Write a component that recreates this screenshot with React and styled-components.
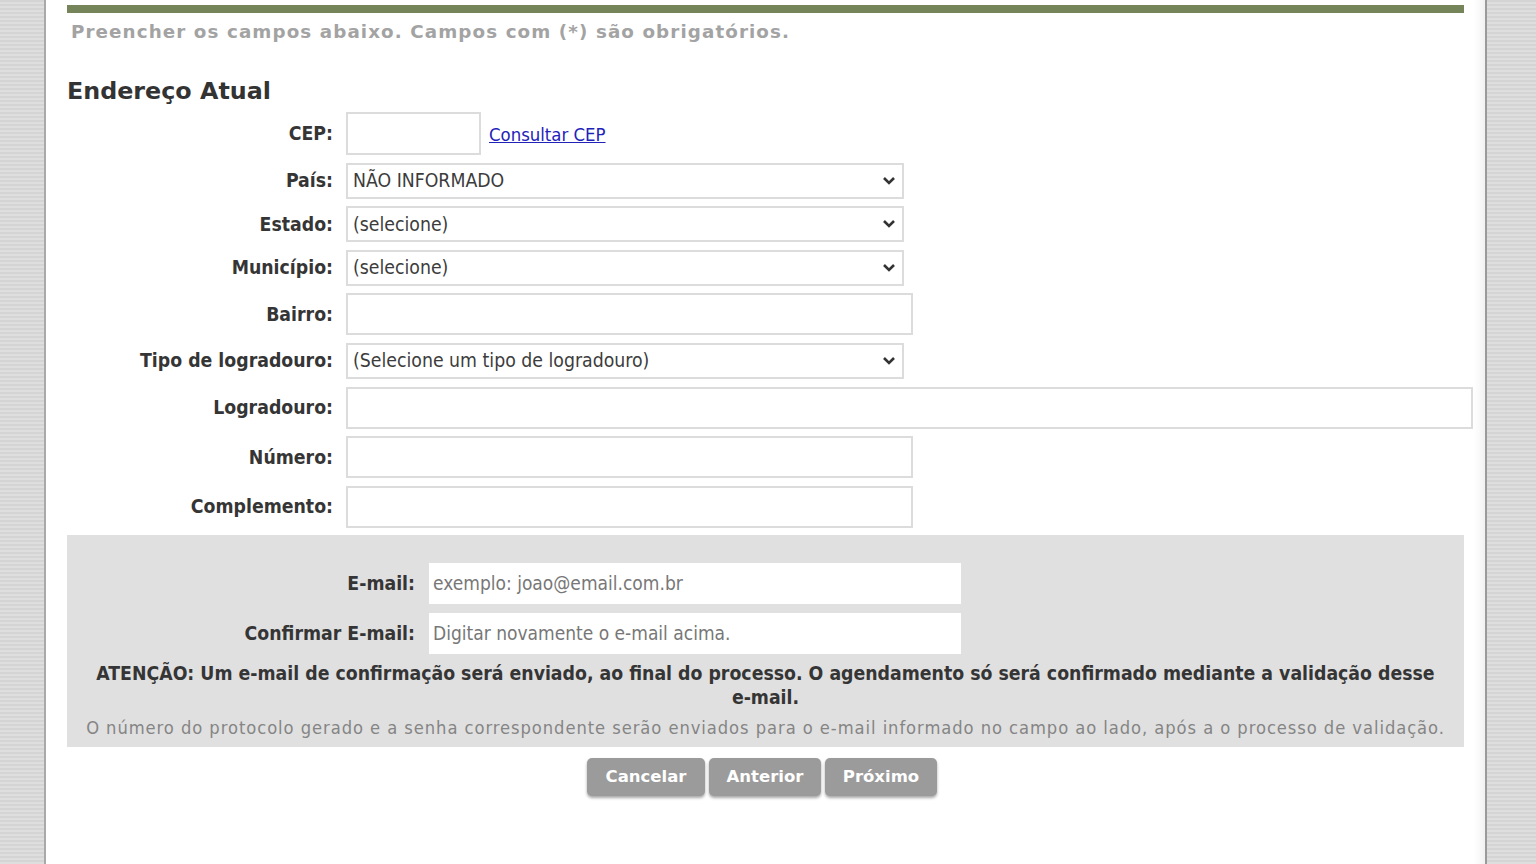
import React from "react";
import styled, { createGlobalStyle } from "styled-components";

const GlobalStyle = createGlobalStyle`
  html, body {
    margin: 0;
    padding: 0;
  }
  body {
    font-family: "DejaVu Sans Condensed", "DejaVu Sans", sans-serif;
    background: repeating-linear-gradient(
      to bottom,
      #d4d4d4 0px,
      #d4d4d4 2px,
      #dedede 2px,
      #dedede 4px
    );
    min-height: 864px;
    overflow: hidden;
  }
`;

const Page = styled.div`
  display: flex;
  justify-content: flex-start;
  min-height: 864px;
`;

const Sheet = styled.main`
  margin-left: 44px;
  width: 1443px;
  min-height: 864px;
  background: #fff;
  border-left: 2px solid #a9a9a9;
  border-right: 2px solid #9a9a9a;
  box-shadow: inset -14px 0 10px -10px #eee;
  padding: 5px 0 0 21px;
  box-sizing: border-box;
`;

const Content = styled.div`
  width: 1397px;
`;

const TopBar = styled.div`
  height: 8px;
  background: #76845a;
`;

const Hint = styled.p`
  margin: 9px 0 0 4px;
  font-family: "DejaVu Sans", sans-serif;
  font-weight: bold;
  font-size: 18.3px;
  letter-spacing: 1.1px;
  color: #a3a3a3;
  line-height: 20px;
`;

const Title = styled.h2`
  margin: 34px 0 6px 0;
  font-family: "DejaVu Sans", sans-serif;
  font-weight: bold;
  font-size: 23.8px;
  color: #333;
  line-height: 30px;
`;

const FormGrid = styled.div`
  display: grid;
  grid-template-columns: 266px auto;
  column-gap: 13px;
  row-gap: 7.6px;
  align-items: center;
`;

const Label = styled.label`
  text-align: right;
  font-weight: bold;
  font-size: 19.3px;
  color: #353535;
`;

const FieldLine = styled.div`
  display: flex;
  align-items: center;
  gap: 8px;
`;

const TextBox = styled.input`
  box-sizing: border-box;
  width: ${(p) => p.$w}px;
  height: ${(p) => p.$h || 42}px;
  border: 2px solid #dcdcdc;
  background: #fff;
  font-family: inherit;
  font-size: 19px;
  padding: 0 6px;
  outline: none;
  &::placeholder {
    color: #777;
  }
`;

const MailBox = styled(TextBox)`
  border: none;
  padding: 0 4px;
`;

const SelectWrap = styled.div`
  position: relative;
  width: 558px;
  height: 36px;
`;

const Select = styled.select`
  appearance: none;
  box-sizing: border-box;
  width: 100%;
  height: 100%;
  border: 2px solid #dcdcdc;
  background: #fff;
  font-family: inherit;
  font-size: 19.3px;
  color: #3c3c3c;
  padding: 0 30px 0 5px;
  outline: none;
`;

const Chevron = styled.svg`
  position: absolute;
  right: 8px;
  top: 13px;
  width: 14px;
  height: 10px;
  pointer-events: none;
`;

const CepLink = styled.a`
  font-size: 18.4px;
  color: #2222bb;
  text-decoration: underline;
  margin-top: 2px;
`;

const MailPanel = styled.section`
  margin-top: 7px;
  background: #e0e0e0;
  padding: 28px 14px 7px 14px;
`;

const MailGrid = styled.div`
  display: grid;
  grid-template-columns: 334px auto;
  column-gap: 14px;
  row-gap: 9px;
  align-items: center;
`;

const Warning = styled.p`
  margin: 8px 0 0 0;
  text-align: center;
  font-weight: bold;
  font-size: 19.3px;
  line-height: 24px;
  color: #353535;
`;

const Note = styled.p`
  margin: 6px 0 0 0;
  text-align: center;
  font-size: 18.2px;
  letter-spacing: 0.94px;
  line-height: 24px;
  color: #858585;
  white-space: nowrap;
`;

const Actions = styled.div`
  display: flex;
  justify-content: center;
  gap: 4px;
  margin-top: 11px;
  padding-right: 7px;
`;

const Button = styled.button`
  width: ${(p) => p.$w}px;
  height: 38px;
  border: none;
  border-radius: 5px;
  background: #9b9b9b;
  color: #fff;
  font-family: "DejaVu Sans", sans-serif;
  font-weight: bold;
  font-size: 16.5px;
  box-shadow: 0 2px 3px rgba(0, 0, 0, 0.35);
  cursor: pointer;
`;

const Arrow = () => (
  <Chevron viewBox="0 0 14 10">
    <path d="M2 2 L7 7 L12 2" fill="none" stroke="#333" strokeWidth="2.6" />
  </Chevron>
);

const Dropdown = ({ value }) => (
  <SelectWrap>
    <Select defaultValue={value}>
      <option>{value}</option>
    </Select>
    <Arrow />
  </SelectWrap>
);

export default function App() {
  return (
    <>
      <GlobalStyle />
      <Page>
        <Sheet>
          <Content>
            <TopBar />
            <Hint>Preencher os campos abaixo. Campos com (*) são obrigatórios.</Hint>
            <Title>Endereço Atual</Title>

            <FormGrid>
              <Label>CEP:</Label>
              <FieldLine>
                <TextBox $w={135} $h={43} />
                <CepLink href="#">Consultar CEP</CepLink>
              </FieldLine>

              <Label>País:</Label>
              <Dropdown value="NÃO INFORMADO" />

              <Label>Estado:</Label>
              <Dropdown value="(selecione)" />

              <Label>Município:</Label>
              <Dropdown value="(selecione)" />

              <Label>Bairro:</Label>
              <TextBox $w={567} />

              <Label>Tipo de logradouro:</Label>
              <Dropdown value="(Selecione um tipo de logradouro)" />

              <Label>Logradouro:</Label>
              <TextBox $w={1127} />

              <Label>Número:</Label>
              <TextBox $w={567} />

              <Label>Complemento:</Label>
              <TextBox $w={567} />
            </FormGrid>

            <MailPanel>
              <MailGrid>
                <Label>E-mail:</Label>
                <MailBox $w={532} $h={41} placeholder="exemplo: joao@email.com.br" />
                <Label>Confirmar E-mail:</Label>
                <MailBox $w={532} $h={41} placeholder="Digitar novamente o e-mail acima." />
              </MailGrid>
              <Warning>
                ATENÇÃO: Um e-mail de confirmação será enviado, ao final do processo. O agendamento só será confirmado mediante a validação desse
                <br />
                e-mail.
              </Warning>
              <Note>
                O número do protocolo gerado e a senha correspondente serão enviados para o e-mail informado no campo ao lado, após a o processo de validação.
              </Note>
            </MailPanel>

            <Actions>
              <Button $w={118}>Cancelar</Button>
              <Button $w={112}>Anterior</Button>
              <Button $w={112}>Próximo</Button>
            </Actions>
          </Content>
        </Sheet>
      </Page>
    </>
  );
}
